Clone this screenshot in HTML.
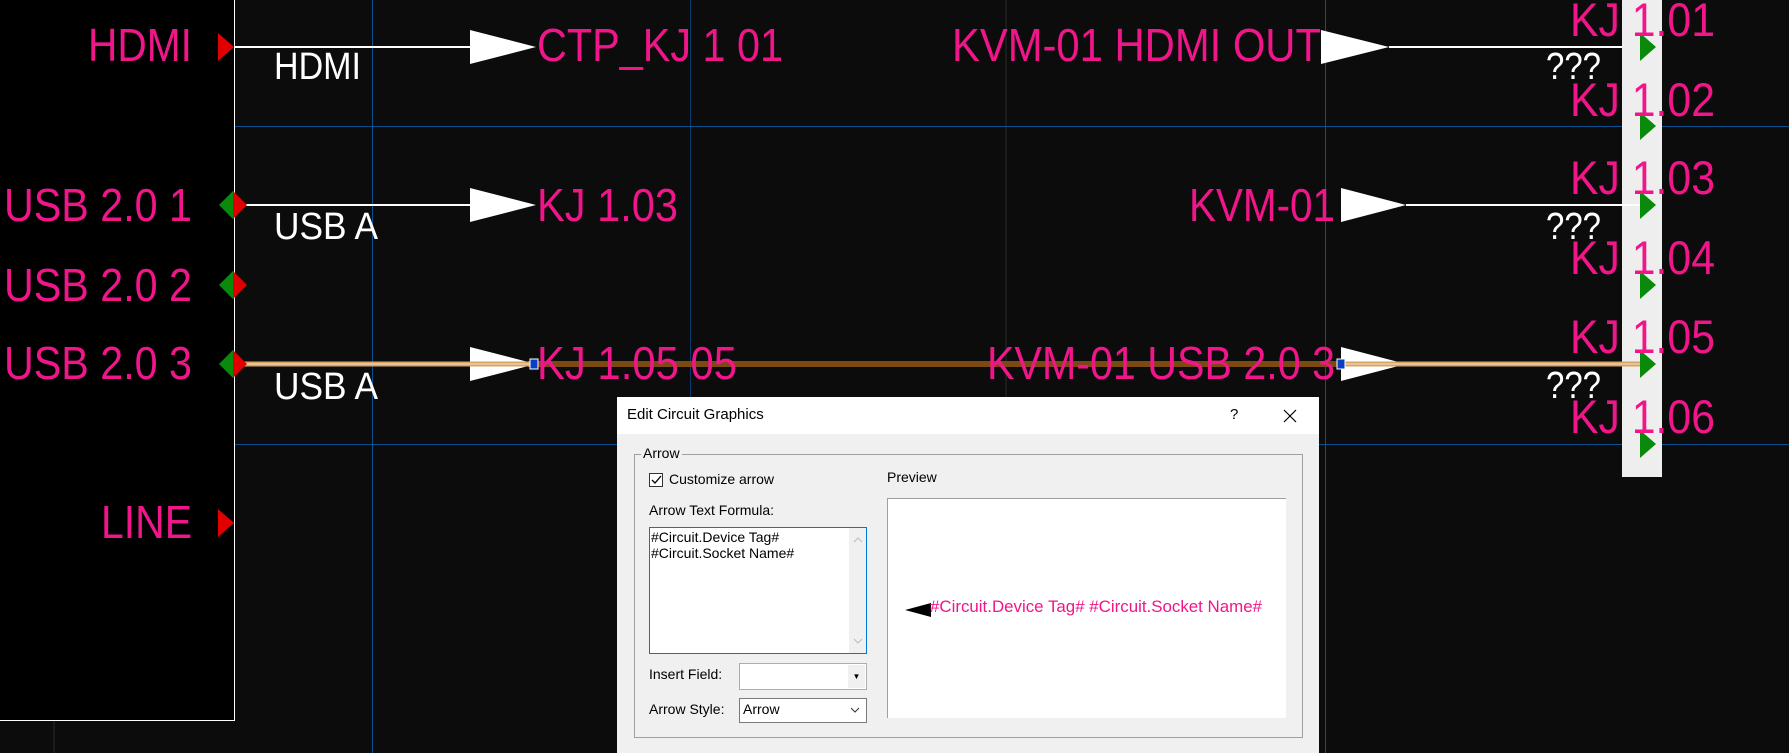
<!DOCTYPE html>
<html><head><meta charset="utf-8"><style>
html,body{margin:0;padding:0;width:1789px;height:753px;overflow:hidden;background:#0c0c0c;font-family:"Liberation Sans",sans-serif}
svg{position:absolute;left:0;top:0}
.dlg{position:absolute;left:617px;top:397px;width:702px;height:356px;background:#f0f0f0;font-size:13px;color:#000}
.tb{position:absolute;left:0;top:0;width:702px;height:37px;background:#fff}
.a{position:absolute;white-space:nowrap}
</style></head><body>
<svg width="1789" height="753" xmlns="http://www.w3.org/2000/svg" font-family="Liberation Sans, sans-serif">
<line x1="1006" y1="0" x2="1006" y2="753" stroke="#2a2a2a" stroke-width="1"/>
<line x1="54" y1="720" x2="54" y2="753" stroke="#2a2a2a" stroke-width="1"/>
<line x1="372.5" y1="0" x2="372.5" y2="753" stroke="#0a4f8f" stroke-width="1"/>
<line x1="690.5" y1="0" x2="690.5" y2="753" stroke="#0a3a6a" stroke-width="1"/>
<line x1="1325.5" y1="0" x2="1325.5" y2="753" stroke="#0a4f8f" stroke-width="1"/>
<line x1="234" y1="126.5" x2="1789" y2="126.5" stroke="#0a4f8f" stroke-width="1"/>
<line x1="234" y1="444.5" x2="1789" y2="444.5" stroke="#0a4f8f" stroke-width="1"/>
<rect x="0" y="0" width="234" height="720" fill="#000"/>
<line x1="234.5" y1="0" x2="234.5" y2="721" stroke="#fff" stroke-width="1"/>
<line x1="0" y1="720.5" x2="235" y2="720.5" stroke="#fff" stroke-width="1"/>
<rect x="1622" y="0" width="40" height="477" fill="#eeeeee"/>
<line x1="234" y1="47" x2="470" y2="47" stroke="#fff" stroke-width="2"/>
<line x1="1389" y1="47" x2="1622" y2="47" stroke="#fff" stroke-width="2"/>
<line x1="234" y1="205" x2="470" y2="205" stroke="#fff" stroke-width="2"/>
<line x1="1406" y1="205" x2="1642" y2="205" stroke="#fff" stroke-width="2"/>
<polygon points="470,30 536,47 470,64" fill="#fff"/>
<polygon points="1321,30 1389,47 1321,64" fill="#fff"/>
<polygon points="470,188 536,205 470,222" fill="#fff"/>
<polygon points="1341,188 1406,205 1341,222" fill="#fff"/>
<polygon points="470,347 536,364 470,381" fill="#fff"/>
<polygon points="1341,347 1406,364 1341,381" fill="#fff"/>
<line x1="528" y1="364" x2="1340" y2="364" stroke="#7a4a12" stroke-width="6"/>
<line x1="234" y1="364" x2="530" y2="364" stroke="#d8a464" stroke-width="5"/>
<line x1="1340" y1="364" x2="1644" y2="364" stroke="#d8a464" stroke-width="5"/>
<line x1="234" y1="364" x2="530" y2="364" stroke="#fff" stroke-width="1" opacity=".7"/>
<line x1="1340" y1="364" x2="1644" y2="364" stroke="#fff" stroke-width="1" opacity=".7"/>
<rect x="530" y="359" width="8" height="10" fill="#0a3fc4" stroke="#fff" stroke-width="1"/>
<rect x="1337" y="359" width="8" height="10" fill="#0a3fc4" stroke="#fff" stroke-width="1"/>
<polygon points="218,33 234,47 218,61" fill="#e00000"/>
<polygon points="218,509 234,523 218,537" fill="#e00000"/>
<polygon points="233,191 233,219 219,205" fill="#0a8a0a"/><polygon points="233,191 247,205 233,219" fill="#e00000"/>
<polygon points="233,271 233,299 219,285" fill="#0a8a0a"/><polygon points="233,271 247,285 233,299" fill="#e00000"/>
<polygon points="233,350 233,378 219,364" fill="#0a8a0a"/><polygon points="233,350 247,364 233,378" fill="#e00000"/>
<g fill="#0a8a0a">
<polygon points="1640,33 1656,47 1640,61"/>
<polygon points="1640,112 1656,126 1640,140"/>
<polygon points="1640,191 1656,205 1640,219"/>
<polygon points="1640,271 1656,285 1640,299"/>
<polygon points="1640,350 1656,364 1640,378"/>
<polygon points="1640,430 1656,444 1640,458"/>
</g>
<g fill="#f0168a" font-size="46">
<text x="88" y="61" textLength="104" lengthAdjust="spacingAndGlyphs">HDMI</text>
<text x="4" y="221" textLength="188" lengthAdjust="spacingAndGlyphs">USB 2.0 1</text>
<text x="4" y="301" textLength="188" lengthAdjust="spacingAndGlyphs">USB 2.0 2</text>
<text x="4" y="379" textLength="188" lengthAdjust="spacingAndGlyphs">USB 2.0 3</text>
<text x="101" y="538" textLength="91" lengthAdjust="spacingAndGlyphs">LINE</text>
<text x="537" y="61" textLength="246" lengthAdjust="spacingAndGlyphs">CTP_KJ 1 01</text>
<text x="537" y="221" textLength="141" lengthAdjust="spacingAndGlyphs">KJ 1.03</text>
<text x="537" y="379" textLength="200" lengthAdjust="spacingAndGlyphs">KJ 1.05 05</text>
<text x="952" y="61" textLength="369" lengthAdjust="spacingAndGlyphs">KVM-01 HDMI OUT</text>
<text x="1189" y="221" textLength="146" lengthAdjust="spacingAndGlyphs">KVM-01</text>
<text x="987" y="379" textLength="348" lengthAdjust="spacingAndGlyphs">KVM-01 USB 2.0 3</text>
</g>
<g fill="#f0168a" font-size="47">
<text x="1570" y="36" textLength="145" lengthAdjust="spacingAndGlyphs">KJ 1.01</text>
<text x="1570" y="116" textLength="145" lengthAdjust="spacingAndGlyphs">KJ 1.02</text>
<text x="1570" y="194" textLength="145" lengthAdjust="spacingAndGlyphs">KJ 1.03</text>
<text x="1570" y="274" textLength="145" lengthAdjust="spacingAndGlyphs">KJ 1.04</text>
<text x="1570" y="353" textLength="145" lengthAdjust="spacingAndGlyphs">KJ 1.05</text>
<text x="1570" y="433" textLength="145" lengthAdjust="spacingAndGlyphs">KJ 1.06</text>
</g>
<g fill="#fff" font-size="38">
<text x="274" y="79" textLength="87" lengthAdjust="spacingAndGlyphs">HDMI</text>
<text x="274" y="239" textLength="104" lengthAdjust="spacingAndGlyphs">USB A</text>
<text x="274" y="399" textLength="104" lengthAdjust="spacingAndGlyphs">USB A</text>
<text x="1546" y="79" textLength="55" lengthAdjust="spacingAndGlyphs">???</text>
<text x="1546" y="239" textLength="55" lengthAdjust="spacingAndGlyphs">???</text>
<text x="1546" y="398" textLength="55" lengthAdjust="spacingAndGlyphs">???</text>
</g>
</svg>

<div class="dlg">
 <div class="tb">
  <div class="a" style="left:10px;top:9px;font-size:15px">Edit Circuit Graphics</div>
  <div class="a" style="left:613px;top:9px;font-size:15px">?</div>
  <svg style="left:666px;top:12px" width="14" height="14"><path d="M1 1L13 13M13 1L1 13" stroke="#000" stroke-width="1.2"/></svg>
 </div>
 <div class="a" style="left:17px;top:57px;width:667px;height:282px;border:1px solid #a0a0a0"></div>
 <div class="a" style="left:24px;top:48px;background:#f0f0f0;padding:0 2px;font-size:14px">Arrow</div>
 <div class="a" style="left:32px;top:76px;width:12px;height:12px;border:1px solid #333;background:#fff"></div>
 <svg style="left:34px;top:78px" width="11" height="10"><path d="M1 5L4 8L10 1" stroke="#000" stroke-width="1.3" fill="none"/></svg>
 <div class="a" style="left:52px;top:74px;font-size:14px">Customize arrow</div>
 <div class="a" style="left:32px;top:105px;font-size:14px">Arrow Text Formula:</div>
 <div class="a" style="left:32px;top:130px;width:216px;height:125px;border:1px solid #0078d7;background:#fff">
  <div class="a" style="left:1px;top:1px;line-height:16px;font-size:14px">#Circuit.Device Tag#<br>#Circuit.Socket Name#</div>
  <div class="a" style="left:199px;top:0;width:17px;height:125px;background:#f0f0f0"></div>
  <svg style="left:203px;top:8px" width="10" height="7"><path d="M1 6L5 2L9 6" stroke="#bbb" fill="none"/></svg>
  <svg style="left:203px;top:110px" width="10" height="7"><path d="M1 1L5 5L9 1" stroke="#bbb" fill="none"/></svg>
 </div>
 <div class="a" style="left:32px;top:269px;font-size:14px">Insert Field:</div>
 <div class="a" style="left:122px;top:266px;width:126px;height:25px;border:1px solid #adadad;background:#fff">
  <div class="a" style="left:108px;top:1px;width:17px;height:23px;background:#f0f0f0;font-size:8px;text-align:center;line-height:23px">&#9660;</div></div>
 <div class="a" style="left:32px;top:304px;font-size:14px">Arrow Style:</div>
 <div class="a" style="left:122px;top:301px;width:126px;height:23px;border:1px solid #7a7a7a;background:#fff">
  <div class="a" style="left:3px;top:2px;font-size:14px">Arrow</div>
  <svg style="left:110px;top:8px" width="10" height="7"><path d="M1 1L5 5L9 1" stroke="#333" fill="none"/></svg></div>
 <div class="a" style="left:270px;top:72px;font-size:14px">Preview</div>
 <div class="a" style="left:270px;top:101px;width:398px;height:219px;background:#fff;border-top:1px solid #a0a0a0;border-left:1px solid #a0a0a0">
  <svg style="left:17px;top:104px" width="26" height="14"><polygon points="0,7 26,0 26,14" fill="#000"/></svg>
  <svg style="left:42px;top:96px" width="340" height="24"><text x="0" y="17" font-family="Liberation Sans, sans-serif" font-size="17" fill="#f0168a" textLength="332" lengthAdjust="spacingAndGlyphs">#Circuit.Device Tag# #Circuit.Socket Name#</text></svg>
 </div>
</div>
</body></html>
